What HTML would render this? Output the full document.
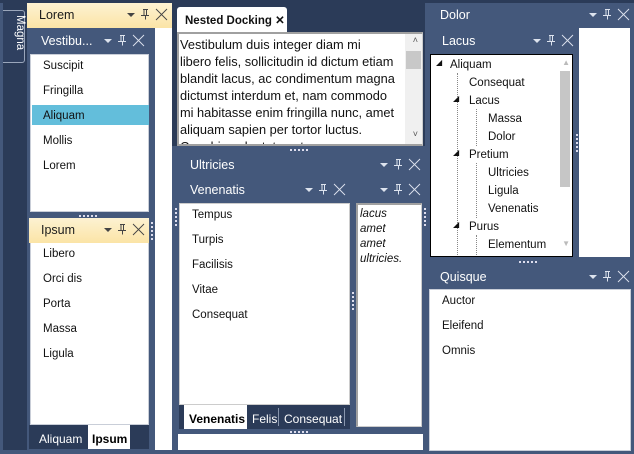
<!DOCTYPE html>
<html><head><meta charset="utf-8"><style>
*{margin:0;padding:0;box-sizing:border-box}
body{width:634px;height:454px;overflow:hidden;background:#44587b;font-family:"Liberation Sans",sans-serif;font-size:11.5px;position:relative}
.a{position:absolute}
.dk{background:#2b3b58}
.w{background:#fff}
.hd{position:absolute;color:#fff;font-size:12.5px;line-height:24px;padding-left:12px;white-space:nowrap}
.yl{background:linear-gradient(#fdf2d2,#fbe4a6);color:#1b1b1b}
.ic{position:absolute;top:0;right:2px;height:24px}
.li{position:absolute;left:12px;color:#111}
.dots{position:absolute;width:20px;height:2px;background:repeating-linear-gradient(90deg,#dde 0 2px,transparent 2px 4px)}
.vd{position:absolute;width:2px;height:20px;background:repeating-linear-gradient(#dde 0 2px,transparent 2px 4px)}
.tr{position:absolute;font-size:11.5px;color:#111}
</style></head><body>
<svg width="0" height="0" style="position:absolute"><defs>
<g id="ic"><path d="M1 10h8l-4 4z" fill="currentColor"/><path d="M18 6.5v6M15 12.5h8M20.5 12.5v-6M17 6.5h5M19.5 12.5v4" stroke="currentColor" fill="none" stroke-width="1"/><path d="M30 6l11 11M41 6l-11 11" stroke="currentColor" stroke-width="0.9" fill="none"/></g>
</defs></svg>

<div class="a dk" style="left:3px;top:0;width:24px;height:450px"></div>
<div class="a" style="left:3px;top:10px;width:22px;height:53px;border:1px solid #9aa6bb;border-left:none;border-radius:0 3px 3px 0;background:#2f4060"></div>
<div class="a" style="left:6px;top:15px;width:20px;color:#fff;font-size:11.5px;writing-mode:vertical-rl">Magna</div>
<div class="a dk" style="left:0;top:0;width:634px;height:3px"></div>

<div class="hd yl" style="left:27px;top:3px;width:145px;height:25px">Lorem<svg class="ic" width="44" height="24" style="color:#444"><use href="#ic"/></svg></div>
<div class="a w" style="left:155px;top:28px;width:17px;height:422px"></div>
<div class="hd" style="left:29px;top:29px;width:120px;height:25px">Vestibu...<svg class="ic" width="44" height="24" style="color:#dde3ee"><use href="#ic"/></svg></div>
<div class="a w" style="left:30px;top:54px;width:119px;height:158px;border:1px solid #c9ced8">
<div class="li" style="top:5px">Suscipit</div>
<div class="li" style="top:30px">Fringilla</div>
<div class="a" style="left:1px;top:50px;width:117px;height:20px;background:#63bedb"></div>
<div class="li" style="top:55px">Aliquam</div>
<div class="li" style="top:80px">Mollis</div>
<div class="li" style="top:105px">Lorem</div>
</div>
<div class="dots" style="left:79px;top:215px"></div>
<div class="hd yl" style="left:29px;top:218px;width:120px;height:25px">Ipsum<svg class="ic" width="44" height="24" style="color:#444"><use href="#ic"/></svg></div>
<div class="a w" style="left:30px;top:243px;width:119px;height:182px;border:1px solid #c9ced8;border-top:none">
<div class="li" style="top:5px">Libero</div>
<div class="li" style="top:30px">Orci dis</div>
<div class="li" style="top:55px">Porta</div>
<div class="li" style="top:80px">Massa</div>
<div class="li" style="top:105px">Ligula</div>
</div>
<div class="a dk" style="left:29px;top:425px;width:120px;height:24px"></div>
<div class="a" style="left:39px;top:432px;color:#fff;font-size:12px">Aliquam</div>
<div class="a w" style="left:88px;top:425px;width:42px;height:24px;font-weight:bold;font-size:12px;padding:7px 0 0 4px;color:#000">Ipsum</div>
<div class="vd" style="left:151px;top:222px"></div>

<div class="a dk" style="left:172px;top:0;width:253px;height:146px"></div>
<div class="a w" style="left:177px;top:7px;width:110px;height:25px;border-radius:3px 3px 0 0;font-weight:bold;font-size:11.5px;padding:6px 0 0 8px;color:#111;white-space:nowrap">Nested Docking &#x2715;</div>
<div class="a w" style="left:177px;top:32px;width:246px;height:114px;border:2px solid #a0a0a0;border-right:1px solid #ccc;overflow:hidden">
<div style="position:absolute;left:1px;top:2px;font-size:12.8px;line-height:17px;color:#111;white-space:nowrap">Vestibulum duis integer diam mi<br>libero felis, sollicitudin id dictum etiam<br>blandit lacus, ac condimentum magna<br>dictumst interdum et, nam commodo<br>mi habitasse enim fringilla nunc, amet<br>aliquam sapien per tortor luctus.<br>Conubia voluptates et nunc congue</div>
<div style="position:absolute;right:0;top:0;width:17px;height:112px;background:#f0f0f0"></div>
<div style="position:absolute;right:1px;top:17px;width:15px;height:18px;background:#c8c8c8"></div>
<div style="position:absolute;right:4px;top:1px;font-size:9px;color:#555">&#x2c4;</div>
<div style="position:absolute;right:4px;top:95px;font-size:9px;color:#555">&#x2c5;</div>
</div>
<div class="dots" style="left:290px;top:149px"></div>
<div class="hd" style="left:178px;top:153px;width:247px;height:24px">Ultricies<svg class="ic" width="44" height="24" style="color:#dde3ee"><use href="#ic"/></svg></div>
<div class="hd" style="left:178px;top:178px;width:172px;height:25px">Venenatis<svg class="ic" width="44" height="24" style="color:#dde3ee"><use href="#ic"/></svg></div>
<svg class="a" width="44" height="24" style="left:379px;top:178px;color:#dde3ee"><use href="#ic"/></svg>
<div class="a w" style="left:179px;top:203px;width:171px;height:202px;border:1px solid #ccc">
<div class="li" style="top:5px">Tempus</div>
<div class="li" style="top:30px">Turpis</div>
<div class="li" style="top:55px">Facilisis</div>
<div class="li" style="top:80px">Vitae</div>
<div class="li" style="top:105px">Consequat</div>
</div>
<div class="a dk" style="left:179px;top:405px;width:171px;height:24px"></div>
<div class="a w" style="left:184px;top:405px;width:63px;height:24px;font-weight:bold;font-size:12px;padding:7px 0 0 5px;color:#000">Venenatis</div>
<div class="a" style="left:252px;top:412px;color:#fff;font-size:12px">Felis</div>
<div class="a" style="left:278px;top:408px;width:1px;height:18px;background:#8896ad"></div>
<div class="a" style="left:284px;top:412px;color:#fff;font-size:12px">Consequat</div>
<div class="a" style="left:344px;top:408px;width:1px;height:18px;background:#8896ad"></div>
<div class="a w" style="left:356px;top:203px;width:66px;height:224px;border:2px solid #a0a0a0;border-right:1px solid #ccc;border-bottom:1px solid #ccc;font-style:italic;font-size:11.5px;line-height:15px;padding:2px 0 0 2px;color:#111">lacus<br>amet<br>amet<br>ultricies.</div>
<div class="vd" style="left:352px;top:292px"></div>
<div class="vd" style="left:175px;top:208px"></div>
<div class="vd" style="left:424px;top:208px"></div>
<div class="dots" style="left:290px;top:431px"></div>
<div class="a w" style="left:178px;top:434px;width:245px;height:16px"></div>

<div class="hd" style="left:428px;top:3px;width:206px;height:25px">Dolor<svg class="ic" width="44" height="24" style="color:#dde3ee"><use href="#ic"/></svg></div>
<div class="hd" style="left:430px;top:29px;width:148px;height:25px">Lacus<svg class="ic" width="44" height="24" style="color:#dde3ee"><use href="#ic"/></svg></div>
<div class="a w" style="left:579px;top:28px;width:51px;height:229px"></div>
<div class="a w" style="left:430px;top:54px;width:143px;height:203px;border:1px solid #000;overflow:hidden">
<div style="position:absolute;right:2px;top:16px;width:10px;height:116px;background:#c6c6c6"></div>
<div style="position:absolute;right:2px;top:3px;font-size:8px;color:#bbb">&#9650;</div>
<div style="position:absolute;right:2px;top:184px;font-size:8px;color:#bbb">&#9660;</div>
<div style="position:absolute;left:26px;top:18px;height:190px;border-left:1px dotted #888"></div>
<div style="position:absolute;left:45px;top:54px;height:37px;border-left:1px dotted #888"></div>
<div style="position:absolute;left:45px;top:108px;height:55px;border-left:1px dotted #888"></div>
<div style="position:absolute;left:45px;top:180px;height:30px;border-left:1px dotted #888"></div>
<div class="tr" style="left:5px;top:3px;font-size:8px">&#9698;</div><div class="tr" style="left:19px;top:4px">Aliquam</div>
<div class="tr" style="left:38px;top:22px">Consequat</div>
<div class="tr" style="left:22px;top:39px;font-size:8px">&#9698;</div><div class="tr" style="left:38px;top:40px">Lacus</div>
<div class="tr" style="left:57px;top:58px">Massa</div>
<div class="tr" style="left:57px;top:76px">Dolor</div>
<div class="tr" style="left:22px;top:93px;font-size:8px">&#9698;</div><div class="tr" style="left:38px;top:94px">Pretium</div>
<div class="tr" style="left:57px;top:112px">Ultricies</div>
<div class="tr" style="left:57px;top:130px">Ligula</div>
<div class="tr" style="left:57px;top:148px">Venenatis</div>
<div class="tr" style="left:22px;top:165px;font-size:8px">&#9698;</div><div class="tr" style="left:38px;top:166px">Purus</div>
<div class="tr" style="left:57px;top:184px">Elementum</div>
</div>
<div class="vd" style="left:576px;top:134px"></div>
<div class="dots" style="left:519px;top:261px"></div>
<div class="hd" style="left:428px;top:265px;width:206px;height:24px">Quisque<svg class="ic" width="44" height="24" style="color:#dde3ee"><use href="#ic"/></svg></div>
<div class="a w" style="left:429px;top:289px;width:202px;height:162px;border:1px solid #c9ced8">
<div class="li" style="top:5px">Auctor</div>
<div class="li" style="top:30px">Eleifend</div>
<div class="li" style="top:55px">Omnis</div>
</div>
</body></html>
